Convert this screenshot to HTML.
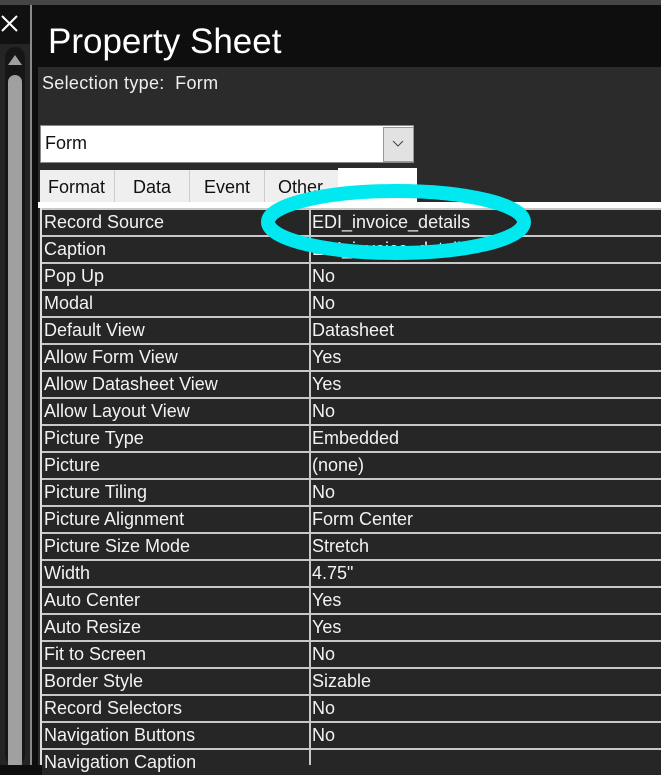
<!DOCTYPE html>
<html><head><style>
body{margin:0;width:661px;height:765px;overflow:hidden;background:#0e0e0e;font-family:"Liberation Sans","DejaVu Sans",sans-serif;position:relative}
.a{position:absolute}
.row{position:absolute;left:42px;width:619px;height:25px;background:#262626;color:#f2f2f2;font-size:18px;line-height:25px}
.row span{position:absolute;top:0}
</style></head><body>
<div class="a" style="left:0;top:0;width:661px;height:5px;background:#454545"></div>
<div class="a" style="left:0;top:5px;width:30px;height:760px;background:#111"></div>
<div class="a" style="left:0;top:44px;width:30px;height:721px;background:#242424"></div>
<div class="a" style="left:5px;top:47px;width:20px;height:718px;background:#161616;border-radius:10px"></div>
<div class="a" style="left:8px;top:55px;width:0;height:0;border-left:7px solid transparent;border-right:7px solid transparent;border-bottom:10px solid #a0a0a0"></div>
<div class="a" style="left:8px;top:75px;width:14px;height:690px;background:#a0a0a0;border-radius:7px 7px 0 0"></div>
<div class="a" style="left:30px;top:5px;width:2px;height:760px;background:#8a8a8a"></div>
<svg class="a" style="left:0;top:14px" width="20" height="20"><path d="M2 2L17 17M17 2L2 17" stroke="#fff" stroke-width="2"/></svg>
<div class="a" style="left:48px;top:18px;color:#fff;font-size:35px;line-height:48px">Property Sheet</div>
<div class="a" style="left:38px;top:67px;width:623px;height:698px;background:#2b2b2b"></div>
<div class="a" style="left:42px;top:72px;color:#eee;font-size:18px;line-height:22px;letter-spacing:0.3px">Selection type:&nbsp; Form</div>
<div class="a" style="left:40px;top:125px;width:372px;height:36px;background:#fff;border:1px solid #888"></div>
<div class="a" style="left:45px;top:130px;color:#111;font-size:18px;line-height:26px">Form</div>
<div class="a" style="left:383px;top:127px;width:29px;height:33px;background:#e2e2e2;border:1px solid #999"></div>
<svg class="a" style="left:392px;top:140px" width="12" height="8"><path d="M1 1L6 6L11 1" stroke="#444" fill="none" stroke-width="1"/></svg>
<div class="a" style="left:40px;top:170px;width:298px;height:32px;background:#efefef"></div>
<div class="a" style="left:114px;top:170px;width:1px;height:32px;background:#ccc"></div>
<div class="a" style="left:189px;top:170px;width:1px;height:32px;background:#ccc"></div>
<div class="a" style="left:264px;top:170px;width:1px;height:32px;background:#ccc"></div>
<div class="a" style="left:48px;top:175px;font-size:18px;line-height:24px;color:#111">Format</div>
<div class="a" style="left:133px;top:175px;font-size:18px;line-height:24px;color:#111">Data</div>
<div class="a" style="left:204px;top:175px;font-size:18px;line-height:24px;color:#111">Event</div>
<div class="a" style="left:278px;top:175px;font-size:18px;line-height:24px;color:#111">Other</div>
<div class="a" style="left:338px;top:168px;width:79px;height:36px;background:#fff"></div>
<div class="a" style="left:38px;top:202px;width:623px;height:6px;background:#fff"></div>
<div class="a" style="left:40px;top:208px;width:2px;height:557px;background:#ddd"></div>
<div class="a" style="left:42px;top:208px;width:619px;height:557px;background:#c8c8c8"></div>
<div id="g"></div>
<div class="a" style="left:309px;top:208px;width:2px;height:557px;background:#c8c8c8"></div>
<svg class="a" style="left:0;top:0" width="661" height="765"><ellipse cx="396" cy="222" rx="128" ry="31" fill="none" stroke="#00e8f0" stroke-width="14"/></svg>
<script>
var d=[["Record Source","EDI_invoice_details"],["Caption","EDI_invoice_details"],["Pop Up","No"],["Modal","No"],["Default View","Datasheet"],["Allow Form View","Yes"],["Allow Datasheet View","Yes"],["Allow Layout View","No"],["Picture Type","Embedded"],["Picture","(none)"],["Picture Tiling","No"],["Picture Alignment","Form Center"],["Picture Size Mode","Stretch"],["Width","4.75\""],["Auto Center","Yes"],["Auto Resize","Yes"],["Fit to Screen","No"],["Border Style","Sizable"],["Record Selectors","No"],["Navigation Buttons","No"],["Navigation Caption",""]];
var h="";d.forEach(function(r,i){h+='<div class="row" style="top:'+(210+i*27)+'px"><span style="left:2px">'+r[0]+'</span><span style="left:270px">'+r[1]+'</span></div>';});
document.getElementById("g").outerHTML=h;
</script>
</body></html>
